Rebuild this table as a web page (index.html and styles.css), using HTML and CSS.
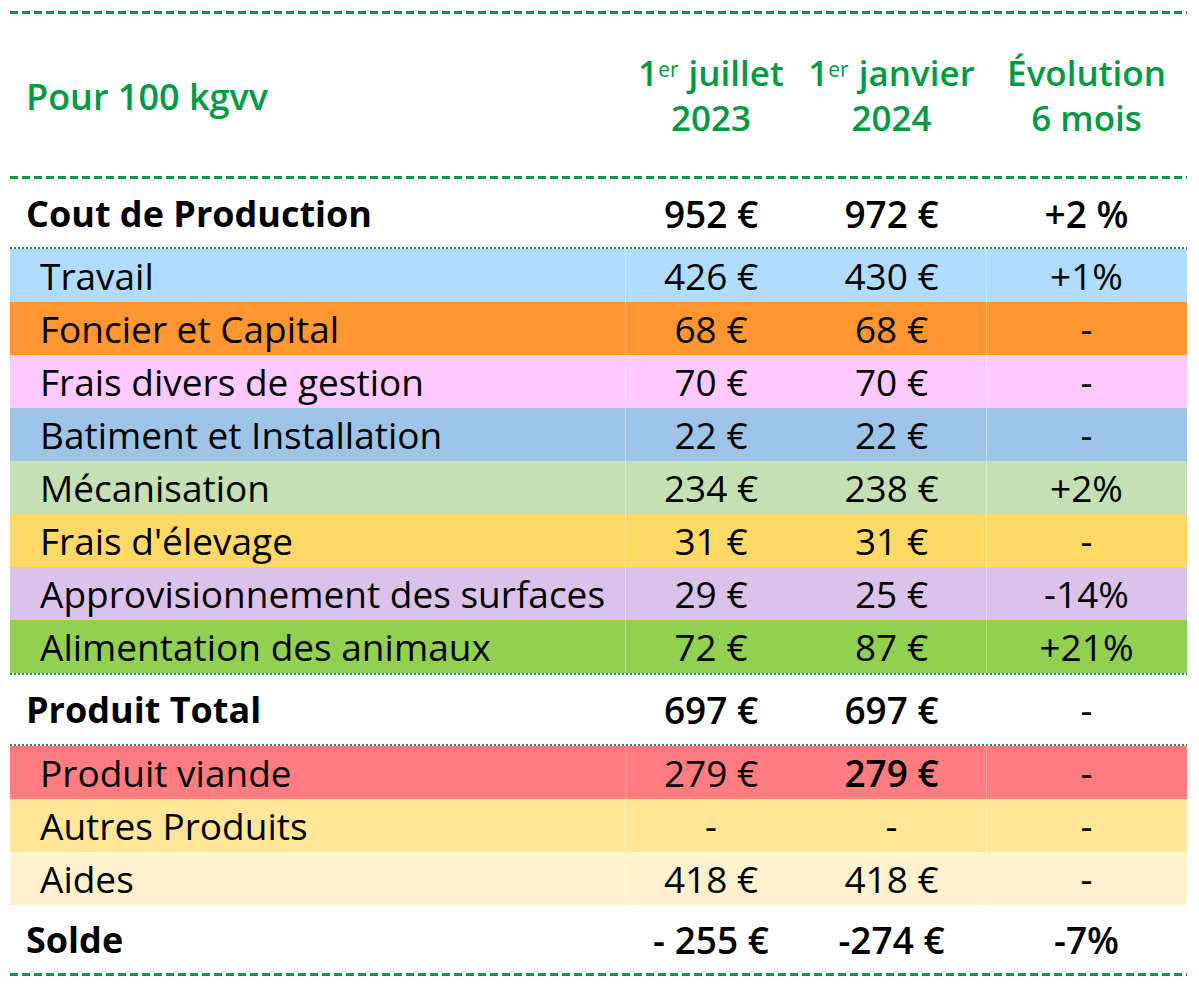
FILE: index.html
```html
<!DOCTYPE html>
<html lang="fr">
<head>
<meta charset="utf-8">
<title>Coût de production pour 100 kgvv</title>
<link rel="stylesheet" href="styles.css">
</head>
<body>
<div class="sheet">
  <div class="rule dashed"></div>
  <div class="row head">
    <div class="cell label"><span>Pour 100 kgvv</span></div>
    <div class="cell num"><span>1<sup>er</sup> juillet<br>2023</span></div>
    <div class="cell num"><span>1<sup>er</sup> janvier<br>2024</span></div>
    <div class="cell num"><span>Évolution<br>6 mois</span></div>
  </div>
  <div class="rule dashed"></div>
  <div class="row total">
    <div class="cell label">Cout de Production</div>
    <div class="cell num b">952 €</div>
    <div class="cell num b">972 €</div>
    <div class="cell num b">+2 %</div>
  </div>
  <div class="rule dotted"></div>
  <div class="row item c-travail">
    <div class="cell label">Travail</div>
    <div class="cell num sep">426 €</div>
    <div class="cell num">430 €</div>
    <div class="cell num sep">+1%</div>
  </div>
  <div class="row item c-foncier">
    <div class="cell label">Foncier et Capital</div>
    <div class="cell num sep">68 €</div>
    <div class="cell num">68 €</div>
    <div class="cell num sep">-</div>
  </div>
  <div class="row item c-frais">
    <div class="cell label">Frais divers de gestion</div>
    <div class="cell num sep">70 €</div>
    <div class="cell num">70 €</div>
    <div class="cell num sep">-</div>
  </div>
  <div class="row item c-batiment">
    <div class="cell label">Batiment et Installation</div>
    <div class="cell num sep">22 €</div>
    <div class="cell num">22 €</div>
    <div class="cell num sep">-</div>
  </div>
  <div class="row item c-meca">
    <div class="cell label">Mécanisation</div>
    <div class="cell num sep">234 €</div>
    <div class="cell num">238 €</div>
    <div class="cell num sep">+2%</div>
  </div>
  <div class="row item c-elevage">
    <div class="cell label">Frais d'élevage</div>
    <div class="cell num sep">31 €</div>
    <div class="cell num">31 €</div>
    <div class="cell num sep">-</div>
  </div>
  <div class="row item c-appro">
    <div class="cell label">Approvisionnement des surfaces</div>
    <div class="cell num sep">29 €</div>
    <div class="cell num">25 €</div>
    <div class="cell num sep">-14%</div>
  </div>
  <div class="row item c-alim">
    <div class="cell label">Alimentation des animaux</div>
    <div class="cell num sep">72 €</div>
    <div class="cell num">87 €</div>
    <div class="cell num sep">+21%</div>
  </div>
  <div class="rule dotted"></div>
  <div class="row total tall">
    <div class="cell label">Produit Total</div>
    <div class="cell num b">697 €</div>
    <div class="cell num b">697 €</div>
    <div class="cell num">-</div>
  </div>
  <div class="rule dotted"></div>
  <div class="row item c-viande">
    <div class="cell label">Produit viande</div>
    <div class="cell num sep">279 €</div>
    <div class="cell num b">279 €</div>
    <div class="cell num sep">-</div>
  </div>
  <div class="row item c-autres">
    <div class="cell label">Autres Produits</div>
    <div class="cell num sep">-</div>
    <div class="cell num">-</div>
    <div class="cell num sep">-</div>
  </div>
  <div class="row item c-aides">
    <div class="cell label">Aides</div>
    <div class="cell num sep">418 €</div>
    <div class="cell num">418 €</div>
    <div class="cell num sep">-</div>
  </div>
  <div class="row total">
    <div class="cell label">Solde</div>
    <div class="cell num b">- 255 €</div>
    <div class="cell num b">-274 €</div>
    <div class="cell num b">-7%</div>
  </div>
  <div class="rule dashed"></div>
</div>
</body>
</html>
```

FILE: styles.css
```css
html, body {
  margin: 0;
  padding: 0;
  background: #ffffff;
}

body {
  font-family: "Open Sans", "Noto Sans", "Liberation Sans", sans-serif;
  color: #000000;
}

.sheet {
  width: 1177px;
  margin: 11px 0 0 10px;
  display: flex;
  flex-direction: column;
}

.rule.dashed {
  height: 3px;
  background-image: repeating-linear-gradient(to right, #009a44 0 8px, transparent 8px 12px);
}

.rule.dotted {
  height: 2px;
  background-image: repeating-linear-gradient(to right, #00a04a 0 2px, transparent 2px 4px);
}

.row {
  display: grid;
  grid-template-columns: 615px 172px 189px 201px;
  align-items: center;
}

.cell {
  height: 100%;
  display: flex;
  align-items: center;
  white-space: nowrap;
}

.cell.num {
  justify-content: center;
  text-align: center;
}

.head {
  height: 162px;
  color: #009a44;
  font-weight: 600;
  font-size: 35px;
  line-height: 45px;
}

.head .label {
  padding-left: 16px;
  padding-top: 2px;
  font-size: 36px;
}

.head .num {
  padding-bottom: 0;
}

.head sup {
  font-size: 0.6em;
  font-weight: 400;
  line-height: 0;
  vertical-align: 0.45em;
  margin-right: 1px;
}

.total {
  height: 68px;
  font-size: 37px;
}

.total .label {
  font-size: 36px;
}

.total.tall {
  height: 69px;
}

.total .label {
  font-weight: 700;
  padding-left: 16px;
}

.b {
  font-weight: 600;
}

.item {
  height: 53px;
  font-size: 37px;
}

.item .label {
  padding-left: 30px;
}

.item .sep {
  box-shadow: inset 1px 0 0 rgba(255, 255, 255, 0.35);
}

.c-travail { background: #afdcff; }
.c-foncier { background: #ff962f; }
.c-frais { background: #ffcaff; }
.c-batiment { background: #9dc3e6; }
.c-meca { background: #c5e0b4; }
.c-elevage { background: #ffd966; }
.c-appro { background: #dbc2eb; }
.c-alim { background: #92d050; }
.c-viande { background: #ff7c80; }
.c-autres { background: #ffe699; }
.c-aides { background: #fff2cc; }
```
